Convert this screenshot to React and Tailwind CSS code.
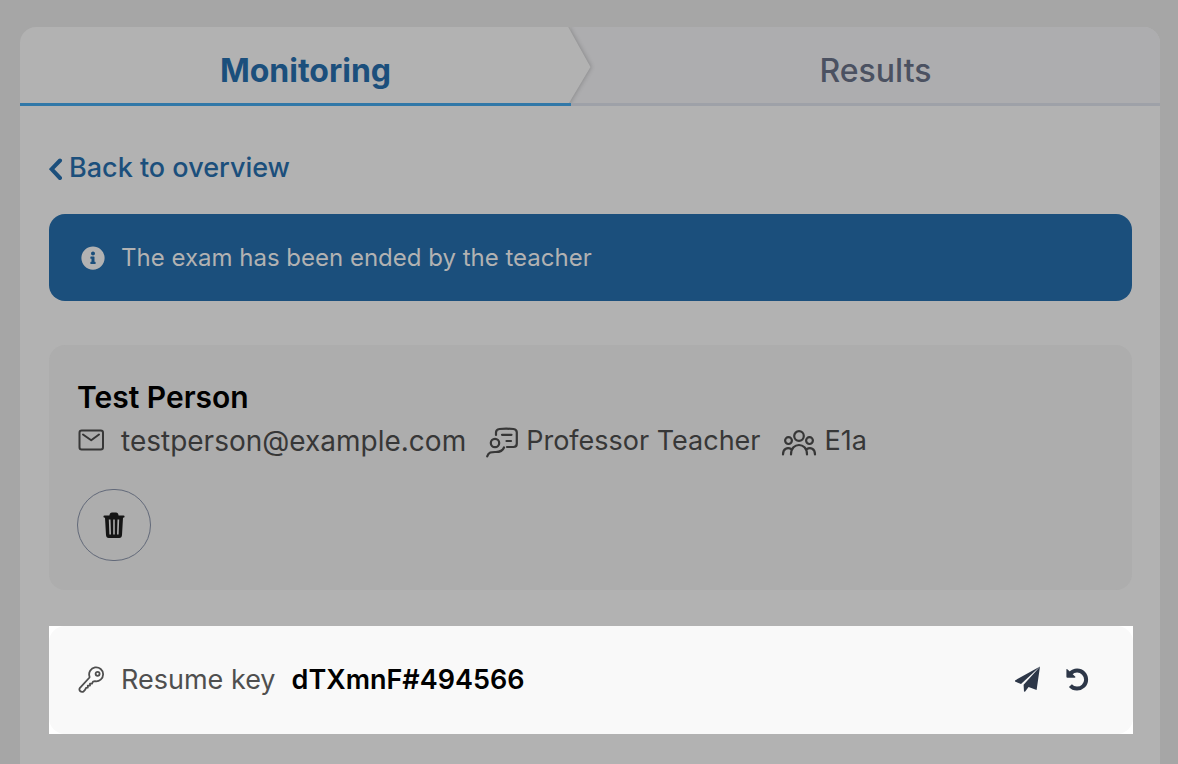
import React from 'react';
import { FaInfoCircle } from 'react-icons/fa';

const ChevronIcon = () => (
  <svg className="w-4 h-6 shrink-0" viewBox="0 0 16 24" fill="none" stroke="currentColor" strokeWidth="4" aria-hidden="true">
    <path d="M11 4.5 L2.6 13.2 L11 22" strokeLinejoin="miter" strokeLinecap="round" />
  </svg>
);

const MailIcon = () => (
  <svg className="w-7 h-6 shrink-0" viewBox="0 0 28 24" fill="none" stroke="currentColor" strokeWidth="2" strokeLinecap="round" strokeLinejoin="round" aria-hidden="true">
    <rect x="2.5" y="1.5" width="23.5" height="19" rx="2.2" />
    <path d="M6 5.5 L14.2 11.2 L22 5.5" />
  </svg>
);

const TeacherIcon = () => (
  <svg className="mt-1 w-8 h-8 shrink-0" viewBox="0 0 32 32" fill="none" stroke="currentColor" strokeWidth="2.2" strokeLinecap="round" strokeLinejoin="round" aria-hidden="true">
    <path d="M10 8 V5.5 Q10 2.5 13.5 2 Q20 1.4 27.5 2 Q30.8 2.5 30.8 5.5 V16.5 Q30.8 20 27.5 20 H21" />
    <path d="M16 7.8 H25.5 M20.5 14 H25" />
    <circle cx="9" cy="16" r="4.2" />
    <path d="M1.2 29.4 C2.5 25 5.5 25 9 25 C13.5 25.2 16.5 24.3 18 20.5" />
  </svg>
);

const GroupIcon = () => (
  <svg className="mt-1 w-9 h-7 shrink-0" viewBox="0 0 36 28" fill="none" stroke="currentColor" strokeWidth="2.2" strokeLinecap="round" aria-hidden="true">
    <circle cx="18" cy="7" r="4.8" />
    <circle cx="7.5" cy="11.6" r="3.4" />
    <circle cx="28.5" cy="11.6" r="3.4" />
    <path d="M10 25.5 C10 12.8 26 12.8 26 25.5" />
    <path d="M2 25.5 C2 19.5 6.5 18 10.5 20.2" />
    <path d="M34 25.5 C34 19.5 29.5 18 25.5 20.2" />
  </svg>
);

const TrashIcon = () => (
  <svg className="w-6 h-7" viewBox="0 0 24 28" aria-hidden="true">
    <path fill="currentColor" fillRule="evenodd" d="M1.4 5.6 Q1.4 4.6 2.6 4.6 H7.4 Q7.8 1.6 10 1.6 H14 Q16.2 1.6 16.6 4.6 H21.4 Q22.6 4.6 22.6 5.6 Q22.6 6.8 21 6.8 L20 24 Q19.8 27 17.3 27 H6.7 Q4.2 27 4 24 L3 6.8 Q1.4 6.8 1.4 5.6 Z M6.8 8.6 L7.4 23.6 H9 L8.5 8.6 Z M11.2 8.6 V23.6 H12.8 V8.6 Z M15.5 8.6 L15 23.6 H16.6 L17.2 8.6 Z" />
  </svg>
);

const KeyIcon = () => (
  <svg className="w-7 h-7 shrink-0" viewBox="0 0 28 28" fill="none" stroke="currentColor" strokeWidth="1.8" strokeLinecap="round" strokeLinejoin="round" aria-hidden="true">
    <path d="M12.5 10.5 A7 7 0 1 1 18 15.2 L16 15.6 L15 17.6 H13 V19.6 H10.8 V21.6 L9 21.8 L8.2 23.6 L6.4 25.6 Q4.5 26.3 3 25 Q1.8 23.5 3 21.8 L12.5 11.5 Z" />
    <circle cx="20.6" cy="7.8" r="2" />
  </svg>
);

const SendIcon = () => (
  <svg className="w-7 h-7" viewBox="0 0 28 28" fill="currentColor" aria-hidden="true">
    <path d="M27 0.4 L2 14.4 L2 15.6 L8 18 Z" />
    <path d="M27 0.4 L23.6 24 L15.6 21 L12 25.8 L11 25.6 L10.6 18.8 L24.4 3.4 Z" />
  </svg>
);

const ResetIcon = () => (
  <svg className="w-6 h-6" viewBox="0 0 24 24" aria-hidden="true">
    <path d="M5.6 5.4 A9 9 0 1 1 5.4 17.6" fill="none" stroke="currentColor" strokeWidth="4" />
    <path d="M1.4 1.2 Q2 0.8 2.6 1.4 L10.4 8.8 Q10.6 9.8 9.6 9.8 H2.4 Q1.4 9.8 1.4 8.8 Z" fill="currentColor" />
  </svg>
);

const StepTabs = () => (
  <nav className="grid grid-cols-[551fr_589fr] h-[79px] text-[32px]">
    <div className="relative z-10 flex border-b-3 border-[#3178a8]">
      <svg className="absolute top-0 left-full -ml-6 w-12 h-[76px] overflow-hidden" viewBox="0 0 48 76" aria-hidden="true">
        <path d="M0 -4 H19 L43.5 40 L22 76 L20 80 H0 Z" fill="#b2b2b2" className="drop-shadow-[1px_0_2px_rgba(0,0,0,0.2)]" />
      </svg>
      <button className="relative flex-1 pt-3 pl-5 font-bold text-[#1b4f7c]">Monitoring</button>
    </div>
    <div className="flex border-b-3 border-[#9ea1a8] bg-[#adadaf]">
      <button className="flex-1 pt-3 pl-5 font-medium text-[#4b5161]">Results</button>
    </div>
  </nav>
);

const App = () => {
  return (
    <div className="min-h-screen bg-[#a6a6a6] pt-[27px] pl-5 pr-[18px] flex flex-col font-[Inter,sans-serif]">
      <main className="flex-1 overflow-hidden rounded-t-2xl bg-[#b2b2b2]">
        <StepTabs />
        <div className="pt-11 pl-[29px] pr-7 pb-9">
          <a href="#overview" className="flex items-center gap-1 h-9 text-[27px] font-medium text-[#1b4f7c]">
            <ChevronIcon />
            Back to overview
          </a>

          <div role="status" className="mt-7 flex items-center gap-4 h-[87px] px-8 rounded-2xl bg-[#1b4f7c] text-[#b2b2b2] text-2xl">
            <FaInfoCircle className="w-6 h-6 shrink-0" />
            The exam has been ended by the teacher
          </div>

          <section className="mt-11 h-[245px] px-7 pt-8 rounded-2xl bg-[#adadad]">
            <h2 className="text-[30px] leading-10 font-semibold text-black">Test Person</h2>
            <div className="flex items-center gap-5 h-12 text-[27px] text-[#373737]">
              <span className="flex items-center gap-4 text-[28px]"><MailIcon />testperson@example.com</span>
              <span className="flex items-center gap-2"><TeacherIcon />Professor Teacher</span>
              <span className="flex items-center gap-2"><GroupIcon />E1a</span>
            </div>
            <button aria-label="Delete" className="mt-6 flex items-center justify-center w-[74px] h-[72px] rounded-full border border-[#626979] text-[#151515]">
              <TrashIcon />
            </button>
          </section>
        </div>

        <div className="ml-[29px] mr-[27px] bg-white">
          <section className="flex items-center h-[108px] px-7 rounded-2xl bg-[#f9f9f9] text-[27px] text-[#4f4f4f]">
            <KeyIcon />
            <span className="ml-4">Resume key</span>
            <strong className="ml-4 font-semibold text-black">dTXmnF#494566</strong>
            <div className="ml-auto mr-4 flex items-center gap-6 text-[#2d3748]">
              <button aria-label="Send key"><SendIcon /></button>
              <button aria-label="Reset key"><ResetIcon /></button>
            </div>
          </section>
        </div>
      </main>
    </div>
  );
};

export default App;
